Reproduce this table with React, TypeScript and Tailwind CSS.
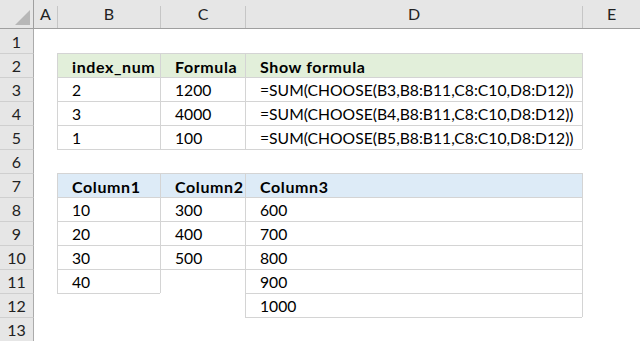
import React from 'react';

// column widths: row-header, A, B, C, D, E
const colWidths = [34, 23, 103, 85, 337, 58];
const colLetters = ['A', 'B', 'C', 'D', 'E'];

type Cell = { text: string; fill?: 'green' | 'blue'; bold?: boolean };

// rows 1..13, cols A..E (index 0..4)
const sheet: Record<number, Record<number, Cell>> = {
  2: {
    1: { text: 'index_num', fill: 'green', bold: true },
    2: { text: 'Formula', fill: 'green', bold: true },
    3: { text: 'Show formula', fill: 'green', bold: true },
  },
  3: { 1: { text: '2' }, 2: { text: '1200' }, 3: { text: '=SUM(CHOOSE(B3,B8:B11,C8:C10,D8:D12))' } },
  4: { 1: { text: '3' }, 2: { text: '4000' }, 3: { text: '=SUM(CHOOSE(B4,B8:B11,C8:C10,D8:D12))' } },
  5: { 1: { text: '1' }, 2: { text: '100' }, 3: { text: '=SUM(CHOOSE(B5,B8:B11,C8:C10,D8:D12))' } },
  7: {
    1: { text: 'Column1', fill: 'blue', bold: true },
    2: { text: 'Column2', fill: 'blue', bold: true },
    3: { text: 'Column3', fill: 'blue', bold: true },
  },
  8: { 1: { text: '10' }, 2: { text: '300' }, 3: { text: '600' } },
  9: { 1: { text: '20' }, 2: { text: '400' }, 3: { text: '700' } },
  10: { 1: { text: '30' }, 2: { text: '500' }, 3: { text: '800' } },
  11: { 1: { text: '40' }, 3: { text: '900' } },
  12: { 3: { text: '1000' } },
};

const inTable = (r: number, c: number) => !!sheet[r]?.[c];

const fontStack = { fontFamily: 'Lato, "Liberation Sans", sans-serif' };

function Corner() {
  return (
    <div className="relative border-r border-b border-[#9f9f9f] bg-[#e6e6e6]">
      <svg className="absolute left-0 top-0" width="34" height="29" viewBox="0 0 34 29">
        <polygon points="15,25 30,10 30,25" fill="#b7b7b7" />
      </svg>
    </div>
  );
}

export default function App() {
  const rows = Array.from({ length: 13 }, (_, i) => i + 1);
  return (
    <div
      className="grid h-[341px] w-[640px] overflow-hidden bg-white text-black"
      style={{
        ...fontStack,
        gridTemplateColumns: colWidths.map((w) => `${w}px`).join(' '),
        gridTemplateRows: `29px repeat(13, 24px)`,
      }}
    >
      <Corner />
      {colLetters.map((l, i) => (
        <div
          key={l}
          className={`relative flex items-center justify-center border-b border-[#9f9f9f] bg-[#e6e6e6] text-[16px] text-[#222] ${i > 0 ? 'pl-[1px]' : ''}`}
        >
          {i > 0 && <span className="absolute left-0 top-[6px] bottom-0 w-px bg-[#c6c6c6]" />}
          {l}
        </div>
      ))}
      {rows.map((r) => (
        <React.Fragment key={r}>
          <div
            className={`flex items-center justify-center border-r border-[#ababab] bg-[#e6e6e6] pt-[1px] text-[16px] text-[#222] ${r > 1 ? 'border-t border-t-[#cfcfcf]' : ''}`}
          >
            {r}
          </div>
          {colLetters.map((_, c) => {
            const cell = sheet[r]?.[c];
            const top = inTable(r, c) || inTable(r - 1, c);
            const left = inTable(r, c) || (c > 0 && inTable(r, c - 1));
            const fill =
              cell?.fill === 'green' ? 'bg-[#e2efda]' : cell?.fill === 'blue' ? 'bg-[#ddebf7]' : 'bg-white';
            return (
              <div
                key={c}
                className={`flex items-center overflow-visible whitespace-nowrap pl-[14px] pt-[2px] ${fill} ${cell?.bold ? 'text-[16px] font-bold tracking-[0.6px]' : 'text-[15.7px]'} ${top ? 'border-t border-[#d4d4d4]' : ''} ${left ? 'border-l border-[#d4d4d4]' : ''}`}
              >
                {cell?.text}
              </div>
            );
          })}
        </React.Fragment>
      ))}
    </div>
  );
}
